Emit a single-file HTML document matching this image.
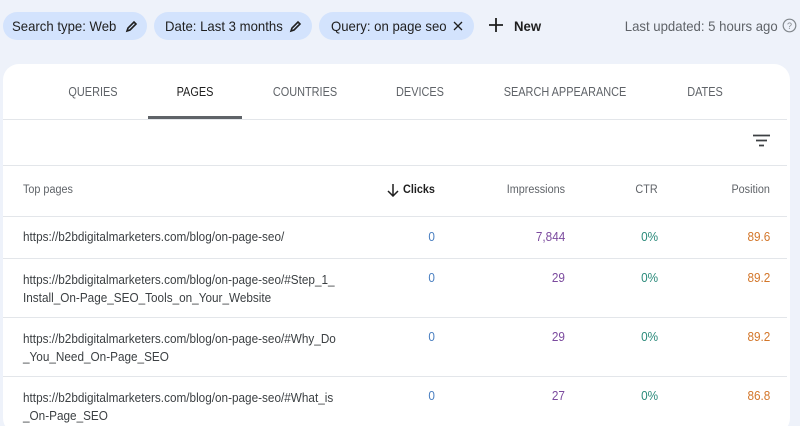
<!DOCTYPE html>
<html><head><style>
*{margin:0;padding:0;box-sizing:border-box}
html,body{width:800px;height:426px;overflow:hidden}
body{background:#eef2fa;font-family:"Liberation Sans",sans-serif;position:relative;color:#3c4043}
.a{position:absolute;white-space:nowrap}
.l{transform:scaleX(.94);transform-origin:left center}
.r{transform:scaleX(.94);transform-origin:right center;text-align:right}
.c{transform:scaleX(.84);transform-origin:center center;text-align:center}
.chip{position:absolute;top:12px;height:28px;background:#d3e3fd;border-radius:14px}
.card{position:absolute;left:3px;top:64px;width:787px;height:370px;background:#fff;border-radius:16px}
.hl{position:absolute;left:3px;width:784px;height:1px;background:#e3e6ea}
.tab{top:84px;font-size:13px;color:#5f6368}
.row{font-size:12.5px;color:#3c4043}
</style></head><body>
<div class="chip" style="left:3px;width:144px"></div>
<div class="chip" style="left:154px;width:158px"></div>
<div class="chip" style="left:319px;width:155px"></div>
<div class="a l" style="left:12px;top:18px;font-size:14px;color:#1f1f1f">Search type: Web</div>
<svg class="a" style="left:125px;top:19px" width="14" height="14" viewBox="0 0 14 14"><path d="M2 12l1-3 6-6 2 2-6 6z" fill="none" stroke="#1f1f1f" stroke-width="1.6"/></svg>
<div class="a l" style="left:165px;top:18px;font-size:14px;color:#1f1f1f">Date: Last 3 months</div>
<svg class="a" style="left:289px;top:19px" width="14" height="14" viewBox="0 0 14 14"><path d="M2 12l1-3 6-6 2 2-6 6z" fill="none" stroke="#1f1f1f" stroke-width="1.6"/></svg>
<div class="a l" style="left:331px;top:18px;font-size:14px;color:#1f1f1f">Query: on page seo</div>
<svg class="a" style="left:453px;top:21px" width="10" height="10" viewBox="0 0 10 10"><path d="M1 1l8 8M9 1l-8 8" stroke="#1f1f1f" stroke-width="1.3"/></svg>
<svg class="a" style="left:489px;top:18px" width="14" height="14" viewBox="0 0 14 14"><path d="M7 0v14M0 7h14" stroke="#1f1f1f" stroke-width="1.8"/></svg>
<div class="a l" style="left:514px;top:18px;font-size:14px;color:#1f1f1f;font-weight:bold">New</div>
<div class="a r" style="right:22px;top:18px;font-size:14px;color:#5f6368">Last updated: 5 hours ago</div>
<svg class="a" style="left:782px;top:18px" width="15" height="15" viewBox="0 0 15 15"><circle cx="7.5" cy="7.5" r="6.3" fill="none" stroke="#80868b" stroke-width="1.2"/><text x="7.5" y="11" font-size="9" text-anchor="middle" fill="#80868b" font-family="Liberation Sans">?</text></svg>
<div class="card"></div>
<div class="a tab c" style="left:53px;width:80px">QUERIES</div>
<div class="a tab c" style="left:155px;width:80px;color:#1f1f1f">PAGES</div>
<div class="a tab c" style="left:250px;width:110px">COUNTRIES</div>
<div class="a tab c" style="left:380px;width:80px">DEVICES</div>
<div class="a tab c" style="left:490px;width:150px">SEARCH APPEARANCE</div>
<div class="a tab c" style="left:670px;width:70px">DATES</div>
<div class="a" style="left:148px;top:116px;width:94px;height:3px;background:#5f6368"></div>
<div class="hl" style="top:119px"></div>
<svg class="a" style="left:753px;top:134px" width="17" height="13" viewBox="0 0 17 13"><path d="M0 1.5h17M3 6.5h11M6 11.5h5" stroke="#3c4043" stroke-width="1.7"/></svg>
<div class="hl" style="top:165px"></div>
<div class="a l" style="left:23px;top:184px;font-size:11.5px;color:#5f6368">Top pages</div>
<svg class="a" style="left:387px;top:184px" width="12" height="13" viewBox="0 0 12 13"><path d="M6 0v11M1 7l5 5 5-5" fill="none" stroke="#1f1f1f" stroke-width="1.5"/></svg>
<div class="a r" style="right:365px;top:184px;font-size:11.5px;color:#1f1f1f;font-weight:bold">Clicks</div>
<div class="a r" style="right:235px;top:184px;font-size:11.5px;color:#5f6368">Impressions</div>
<div class="a r" style="right:142px;top:184px;font-size:11.5px;color:#5f6368">CTR</div>
<div class="a r" style="right:30px;top:184px;font-size:11.5px;color:#5f6368">Position</div>
<div class="hl" style="top:216px"></div>
<div class="hl" style="top:258px"></div>
<div class="hl" style="top:317px"></div>
<div class="hl" style="top:376px"></div>

<div class="a row l" style="left:23px;top:230px">https://b2bdigitalmarketers.com/blog/on-page-seo/</div>
<div class="a row r" style="right:365px;top:230px;color:#4a7fc1">0</div>
<div class="a row r" style="right:235px;top:230px;color:#7b4a9e">7,844</div>
<div class="a row r" style="right:142px;top:230px;color:#2a8a7a">0%</div>
<div class="a row r" style="right:30px;top:230px;color:#d3762a">89.6</div>

<div class="a row l" style="left:23px;top:271px;line-height:18px">https://b2bdigitalmarketers.com/blog/on-page-seo/#Step_1_<br>Install_On-Page_SEO_Tools_on_Your_Website</div>
<div class="a row r" style="right:365px;top:271px;color:#4a7fc1">0</div>
<div class="a row r" style="right:235px;top:271px;color:#7b4a9e">29</div>
<div class="a row r" style="right:142px;top:271px;color:#2a8a7a">0%</div>
<div class="a row r" style="right:30px;top:271px;color:#d3762a">89.2</div>

<div class="a row l" style="left:23px;top:330px;line-height:18px">https://b2bdigitalmarketers.com/blog/on-page-seo/#Why_Do<br>_You_Need_On-Page_SEO</div>
<div class="a row r" style="right:365px;top:330px;color:#4a7fc1">0</div>
<div class="a row r" style="right:235px;top:330px;color:#7b4a9e">29</div>
<div class="a row r" style="right:142px;top:330px;color:#2a8a7a">0%</div>
<div class="a row r" style="right:30px;top:330px;color:#d3762a">89.2</div>

<div class="a row l" style="left:23px;top:389px;line-height:18px">https://b2bdigitalmarketers.com/blog/on-page-seo/#What_is<br>_On-Page_SEO</div>
<div class="a row r" style="right:365px;top:389px;color:#4a7fc1">0</div>
<div class="a row r" style="right:235px;top:389px;color:#7b4a9e">27</div>
<div class="a row r" style="right:142px;top:389px;color:#2a8a7a">0%</div>
<div class="a row r" style="right:30px;top:389px;color:#d3762a">86.8</div>
</body></html>
